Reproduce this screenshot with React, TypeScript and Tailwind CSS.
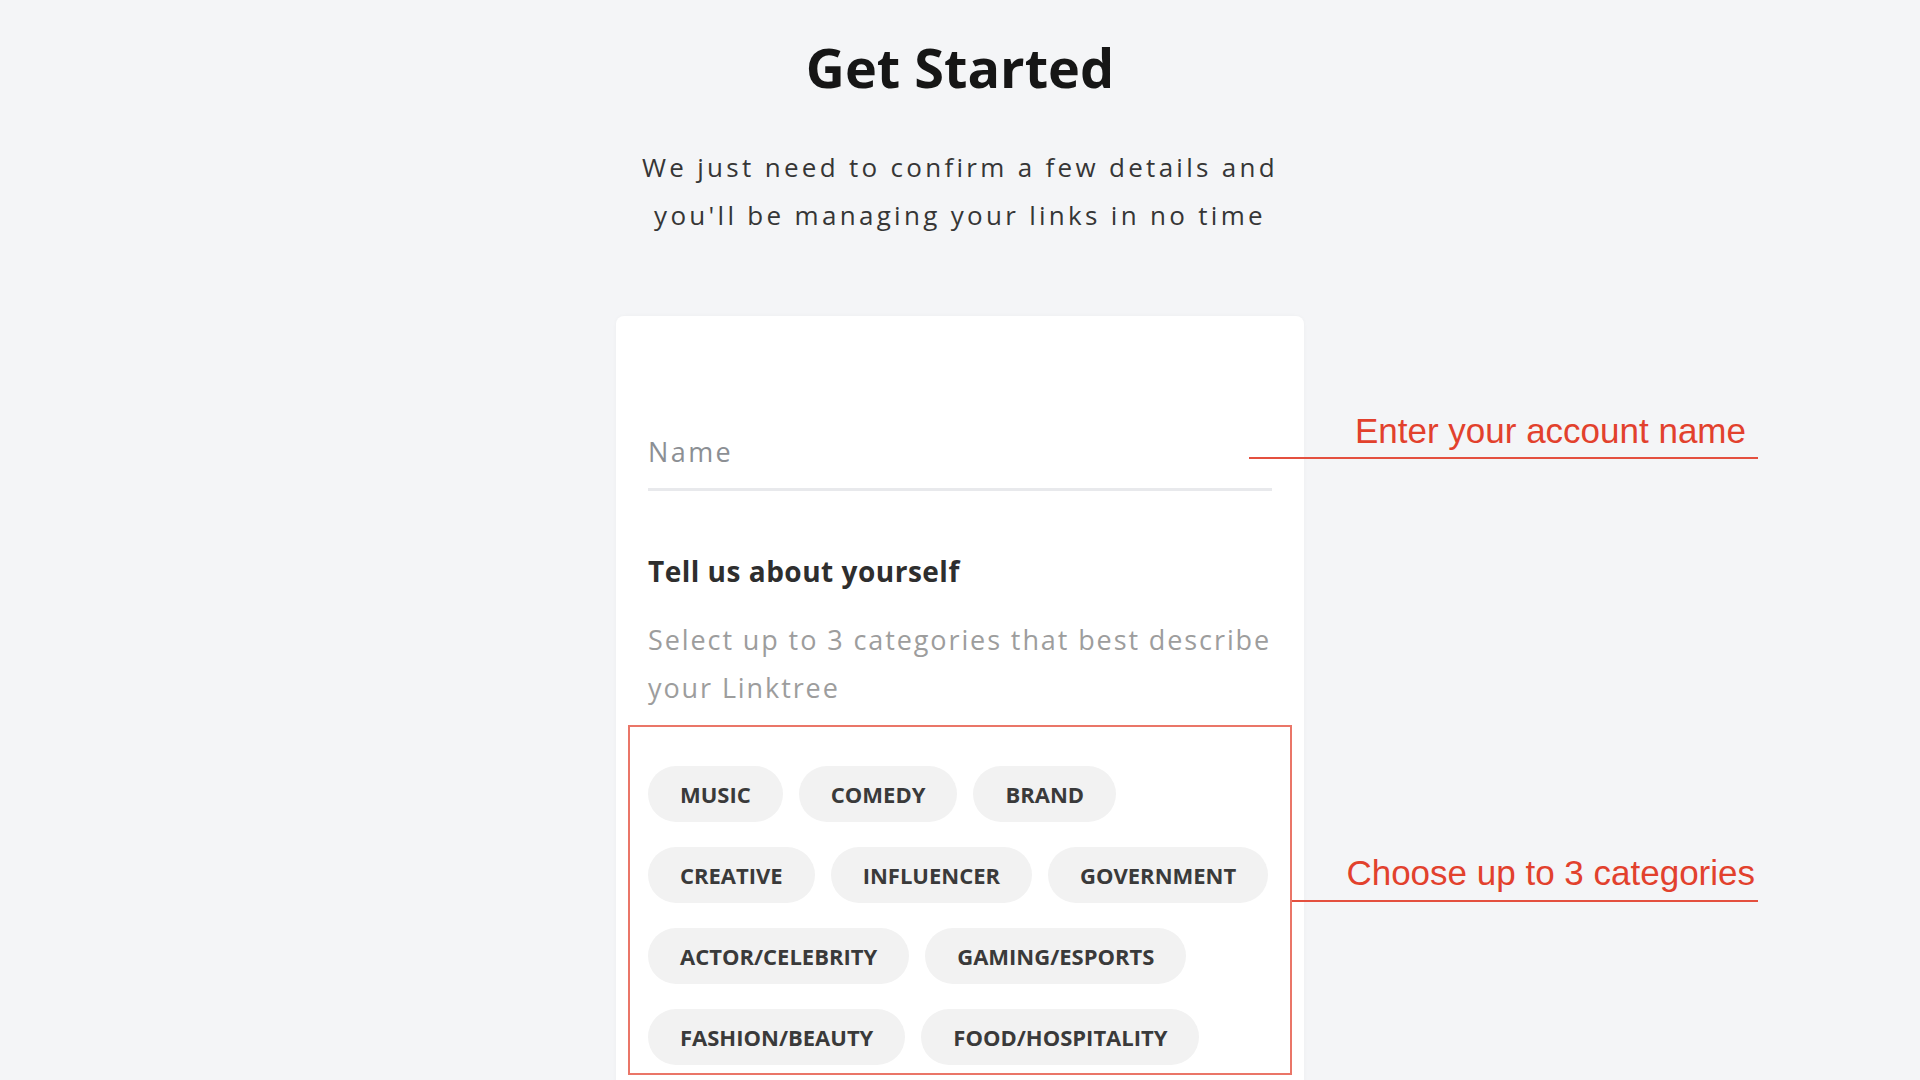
import { useState } from "react";

const CATEGORY_ROWS: string[][] = [
  ["MUSIC", "COMEDY", "BRAND"],
  ["CREATIVE", "INFLUENCER", "GOVERNMENT"],
  ["ACTOR/CELEBRITY", "GAMING/ESPORTS"],
  ["FASHION/BEAUTY", "FOOD/HOSPITALITY"],
];

function CategoryChip({
  label,
  active,
  onToggle,
}: {
  label: string;
  active: boolean;
  onToggle: () => void;
}) {
  return (
    <button
      type="button"
      onClick={onToggle}
      className={`flex h-[56px] items-center rounded-full px-8 text-[22px] font-bold ${
        active ? "bg-[#39e09b] text-[#1a1a1a]" : "bg-[#f2f2f2] text-[#3a3a3a]"
      }`}
    >
      {label}
    </button>
  );
}

export default function App() {
  const [name, setName] = useState("");
  const [picked, setPicked] = useState<string[]>([]);

  const toggle = (label: string) =>
    setPicked((prev) =>
      prev.includes(label)
        ? prev.filter((p) => p !== label)
        : prev.length < 3
          ? [...prev, label]
          : prev,
    );

  return (
    <div className="relative h-[1080px] w-full overflow-hidden bg-[#f4f5f7] font-['Open_Sans',sans-serif]">
      <div className="flex flex-col items-center pt-[35px]">
        <h1 className="text-[54px] font-bold leading-[64px] text-[#161616]">Get Started</h1>
        <p className="mt-[44px] text-center text-[26px] font-medium leading-[48px] tracking-[3.3px] text-[#363636]">
          We just need to confirm a few details and
          <br />
          you'll be managing your links in no time
        </p>

        <div className="mt-[77px] w-[688px] rounded-lg bg-white px-8 pt-[116px] pb-10 shadow-[0_0_4px_rgba(0,0,0,0.03)]">
          <div className="border-b-[3px] border-[#e8e9ec] pb-[16px]">
            <input
              value={name}
              onChange={(e) => setName(e.target.value)}
              placeholder="Name"
              className="h-[40px] w-full bg-transparent text-[27px] tracking-[2.4px] text-[#2e2e2e] outline-none placeholder:text-[#8c8f94]"
            />
          </div>

          <h2 className="mt-[62px] text-[28px] font-bold leading-[36px] tracking-[0.5px] text-[#2e2e2e]">
            Tell us about yourself
          </h2>
          <p className="mt-[27px] text-[27px] leading-[48px] tracking-[1.9px] text-[#9d9d9d]">
            Select up to 3 categories that best describe your Linktree
          </p>

          <div className="-mx-[20px] mt-[13px] flex flex-col gap-y-[25px] border-2 border-[#ea7668] pt-[39px] pb-[8px] pl-[18px]">
            {CATEGORY_ROWS.map((row) => (
              <div key={row[0]} className="flex gap-x-4">
                {row.map((label) => (
                  <CategoryChip
                    key={label}
                    label={label}
                    active={picked.includes(label)}
                    onToggle={() => toggle(label)}
                  />
                ))}
              </div>
            ))}
          </div>
        </div>
      </div>

      {/* callouts */}
      <div className="absolute left-[1249px] top-[413px] w-[509px] border-b-2 border-[#e4503f] pr-[12px] pb-[9px] text-right font-['Liberation_Sans',Arial,sans-serif] text-[35px] leading-[35px] text-[#e2412d]">
        Enter your account name
      </div>
      <div className="absolute left-[1292px] top-[855px] w-[466px] border-b-2 border-[#e4503f] pr-[3px] pb-[10px] text-right font-['Liberation_Sans',Arial,sans-serif] text-[35px] leading-[35px] text-[#e2412d]">
        Choose up to 3 categories
      </div>
    </div>
  );
}
